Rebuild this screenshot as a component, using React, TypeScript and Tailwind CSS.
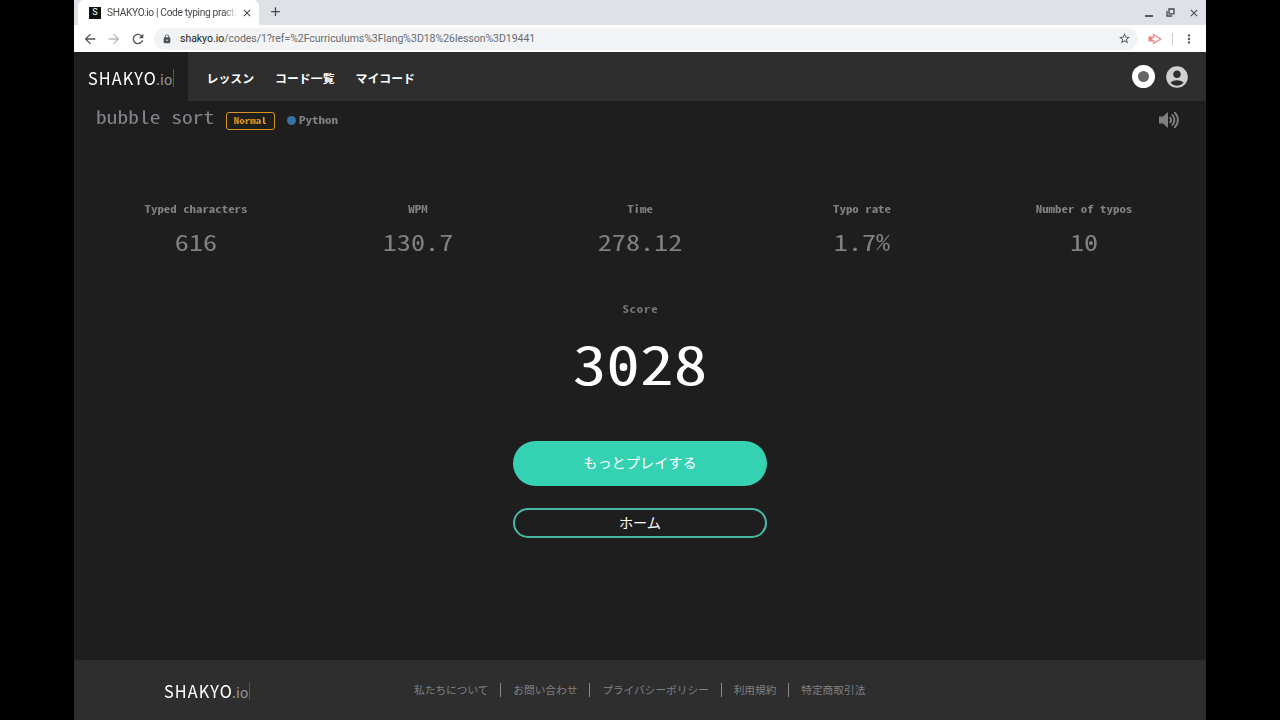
import React from "react";
import { MdArrowBack, MdArrowForward, MdRefresh, MdLock, MdStarBorder, MdMoreVert, MdClose, MdAdd, MdAccountCircle } from "react-icons/md";

const mono = "font-['Noto_Sans_Mono_CJK_JP','DejaVu_Sans_Mono',monospace]";

interface Stat {
  label: string;
  value: string;
}

const stats: Stat[] = [
  { label: "Typed characters", value: "616" },
  { label: "WPM", value: "130.7" },
  { label: "Time", value: "278.12" },
  { label: "Typo rate", value: "1.7%" },
  { label: "Number of typos", value: "10" },
];

const navLinks = ["レッスン", "コード一覧", "マイコード"];

const footerLinks = ["私たちについて", "お問い合わせ", "プライバシーポリシー", "利用規約", "特定商取引法"];

// Digits with a dotted zero, the dot is laid over the plain glyph
const Digits: React.FC<{ value: string }> = ({ value }) => (
  <>
    {value.split("").map((char, i) =>
      char === "0" ? (
        <span key={i} className="relative">
          0
          <span className="absolute left-[0.19em] top-[0.73em] w-[0.12em] h-[0.15em] rounded-full bg-current" />
        </span>
      ) : (
        <span key={i}>{char}</span>
      )
    )}
  </>
);

const Logo: React.FC = () => (
  <div className="flex items-center h-5 whitespace-nowrap">
    <span className="w-[68px] text-[17.5px] leading-5 tracking-[1.2px] text-white">
      <span className="inline-block origin-left scale-x-[0.93]">SHAKYO</span>
    </span>
    <span className="w-[17px] text-[13.8px] leading-5 pt-[2px] tracking-[0.2px] text-[#999]">.io</span>
    <span className="w-px h-[18px] bg-[#555]" />
  </div>
);

const TabStrip: React.FC = () => (
  <div className="flex h-[25px] bg-[#dee1e6] text-[#45484c]">
    <div className="w-1 h-full rounded-br-md" />
    <div className="flex items-center w-[181px] h-full pl-[11px] pr-[6px] bg-white rounded-t-md">
      <span className="flex items-center justify-center w-3 h-3 bg-[#111] text-white text-[9px] leading-none">S</span>
      <span className="w-[130px] ml-[6px] overflow-hidden whitespace-nowrap text-[10.2px] tracking-[-0.34px] text-[#45484c] [mask-image:linear-gradient(to_right,black_90%,transparent)]">
        SHAKYO.io | Code typing practi
      </span>
      <MdClose className="w-[12px] h-[12px] ml-[4px] shrink-0" />
    </div>
    <MdAdd className="w-[15px] h-[15px] ml-[9px] mt-[4px]" />
    <div className="flex items-center ml-auto mr-[6px] gap-[13px]">
      <span className="w-2 h-[2px] mt-[6px] -ml-1 bg-[#55585c]" />
      <svg className="w-[9px] h-[9px]" viewBox="0 0 9 9" fill="none" stroke="currentColor" strokeWidth="1.3">
        <path d="M3 1H8V5.8H3ZM1 2.8V8H6.2" />
      </svg>
      <MdClose className="w-[12px] h-[12px]" />
    </div>
  </div>
);

const Toolbar: React.FC = () => (
  <div className="flex items-center h-[27px] bg-white text-[#505357]">
    <MdArrowBack className="w-[16px] h-[16px] ml-[8px]" />
    <MdArrowForward className="w-[16px] h-[16px] ml-[8px] text-[#b7b9bb]" />
    <MdRefresh className="w-[16px] h-[16px] ml-[8px]" />
    <div className="flex items-center w-[984px] h-[22px] ml-[8px] pl-[8px] pr-[7px] rounded-full bg-[#f1f3f4]">
      <MdLock className="w-[10px] h-[10px]" />
      <span className="ml-[8px] pt-px text-[10.5px] tracking-[-0.03px] text-[#686b70]">
        <span className="text-[#222]">shakyo.io</span>/codes/1?ref=%2Fcurriculums%3Flang%3D18%26lesson%3D19441
      </span>
      <MdStarBorder className="w-[13px] h-[13px] ml-auto" />
    </div>
    <svg className="w-[14px] h-[12px] ml-[10px]" viewBox="0 0 14 12" fill="none" stroke="#ed8585" strokeWidth="1.2">
      <path d="M5.5 3.4V1.5L12.7 6L5.5 10.5V8.6" />
      <path d="M1 4.2H4V7.8H1Z" fill="#ed8585" />
      <path d="M4 4.2H6.5M4 7.8H6.5" />
    </svg>
    <span className="w-px h-3 ml-[10px] bg-[#ccc]" />
    <MdMoreVert className="w-[14px] h-[14px] ml-[9px]" />
  </div>
);

const Header: React.FC = () => (
  <header className="flex h-[49px] bg-[#2e2e2e]">
    <div className="w-[114px] pl-[14px] pt-[16px] bg-[#1e1e1e]">
      <Logo />
    </div>
    <nav className="flex items-center gap-[21px] pl-[18.5px] pt-[2px] text-[11.9px] font-bold text-white">
      {navLinks.map((link) => (
        <a key={link}>{link}</a>
      ))}
    </nav>
    <div className="flex items-center gap-[10px] ml-auto mr-[17px]">
      <span className="flex items-center justify-center w-[23px] h-[23px] rounded-full bg-white">
        <span className="w-[11px] h-[11px] rounded-full bg-[#666]" />
      </span>
      <MdAccountCircle className="w-[26px] h-[26px] -m-px text-[#d0d0d0]" />
    </div>
  </header>
);

const LessonBar: React.FC = () => (
  <div className={`flex h-[40px] pl-[22px] pr-[26px] ${mono}`}>
    <h1 className="w-[119px] pt-[4px] text-[17.2px] leading-6 text-[#82828a] whitespace-nowrap origin-left scale-x-[1.25]">bubble sort</h1>
    <span className="flex items-center justify-center w-[49px] h-[18px] mt-[11px] ml-[11px] rounded-[3px] border border-[#d9931f] text-[8.8px] font-bold text-[#e69a1c]">
      <span className="scale-x-[1.25]">Normal</span>
    </span>
    <span className="w-[9px] h-[9px] mt-[15px] ml-[12px] rounded-full bg-[#3572a5]" />
    <span className="mt-[9px] ml-[3px] text-[10.4px] leading-5 font-bold text-[#808080] origin-left scale-x-[1.25]">Python</span>
    <svg className="w-[22px] h-[18px] mt-[10px] ml-auto" viewBox="0 0 22 18" fill="none" stroke="#808080" strokeWidth="1.9" strokeLinecap="round">
      <path d="M1 5.5H5L10 1V17L5 12.5H1Z" fill="#808080" stroke="none" />
      <path d="M12.3 6.8Q14 9 12.3 11.2M14.5 4Q18.4 9 14.5 14M16.9 1.7Q23 9 16.9 16.3" />
    </svg>
  </div>
);

const App: React.FC = () => {
  return (
    <div className="flex justify-center w-[1280px] h-[720px] overflow-hidden bg-black">
      <div className="flex flex-col w-[1132px] h-full bg-[#1e1e1e] font-['Noto_Sans_CJK_JP',sans-serif]">
        <div className="font-[Roboto,sans-serif]">
          <TabStrip />
          <Toolbar />
        </div>
        <Header />
        <LessonBar />
        <main className={`flex flex-col items-center flex-1 pt-[58px] ${mono}`}>
          <div className="grid grid-cols-5 w-[1110px] text-center text-[#808080]">
            {stats.map((stat) => (
              <div key={stat.label} className="scale-x-[1.25]">
                <div className="text-[10.3px] leading-5 font-bold">{stat.label}</div>
                <div className="mt-[3px] text-[22.6px] leading-10">
                  <Digits value={stat.value} />
                </div>
              </div>
            ))}
          </div>
          <div className="mt-[37px] text-[10.3px] leading-5 font-bold tracking-[0.6px] text-[#757575] scale-x-[1.25]">Score</div>
          <div className="mt-[3px] text-[53px] leading-[80px] text-white scale-x-[1.27]">
            <Digits value="3028" />
          </div>
          <div className="flex flex-col mt-[39px] gap-[22px] w-[254px] font-['Noto_Sans_CJK_JP',sans-serif] text-[14.2px]">
            <button className="h-[45px] pb-[2px] rounded-full bg-[#34d1b2] text-white">もっとプレイする</button>
            <button className="h-[30px] pb-[2px] rounded-full border-2 border-[#46b9a5] text-white leading-none">ホーム</button>
          </div>
        </main>
        <footer className="flex h-[60px] bg-[#2e2e2e]">
          <div className="w-[340px] pl-[90px] pt-[21px]">
            <Logo />
          </div>
          <div className="flex items-center h-[14px] mt-[23px] text-[10.7px] text-[#808080]">
            {footerLinks.map((link, i) => (
              <React.Fragment key={link}>
                {i > 0 && <span className="w-px h-[14px] mx-[11.9px] bg-[#888]" />}
                <a>{link}</a>
              </React.Fragment>
            ))}
          </div>
        </footer>
      </div>
    </div>
  );
};

export default App;
